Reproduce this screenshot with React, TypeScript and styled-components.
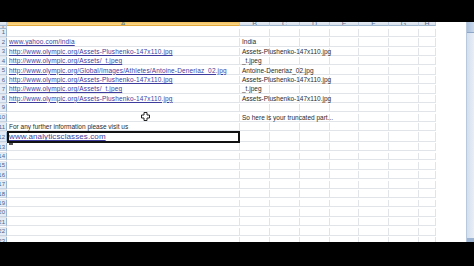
import React from 'react';
import styled, { createGlobalStyle } from 'styled-components';

const GlobalStyle = createGlobalStyle`
  html, body {
    margin: 0;
    padding: 0;
    background: #000;
  }
`;

const COLS = '7px 233px 30px 30px 30px 29px 30px 30px 17px';
const LETTERS = ['', 'A', 'B', 'C', 'D', 'E', 'F', 'G', 'H', 'I'];

const Screen = styled.div`
  width: 474px;
  height: 266px;
  background: #000;
  display: flex;
  flex-direction: column;
  overflow: hidden;
  font-family: 'Liberation Sans', Arial, sans-serif;
`;

const Letterbox = styled.div<{ $h: number }>`
  height: ${({ $h }) => $h}px;
  flex: none;
  background: #000;
`;

const Sheet = styled.div`
  height: 220px;
  flex: none;
  display: flex;
  background: #fff;
`;

const GridArea = styled.div`
  width: 466px;
  overflow: hidden;
  position: relative;
`;

const HeaderRow = styled.div`
  display: grid;
  grid-template-columns: ${COLS};
  height: 7px;
  overflow: hidden;
`;

const HeaderCell = styled.div<{ $active?: boolean }>`
  box-sizing: border-box;
  background: ${({ $active }) =>
    $active ? 'linear-gradient(#f3c15e, #f9d88c)' : 'linear-gradient(#e4eaf2, #d7e0ec)'};
  border-right: 1px solid #b9c8da;
  border-bottom: 1px solid ${({ $active }) => ($active ? '#e2a93c' : '#9eb6ce')};
  color: #5c6f8c;
  font-size: 7px;
  line-height: 4px;
  text-align: center;
  overflow: hidden;
`;

const Row = styled.div<{ $tall?: boolean }>`
  display: grid;
  grid-template-columns: ${COLS};
  height: ${({ $tall }) => ($tall ? 11 : 9.4)}px;
`;

const RowLabel = styled.div`
  box-sizing: border-box;
  background: #e4ecf7;
  border-right: 1px solid #9eb6ce;
  border-bottom: 1px solid #c5d3e3;
  color: #4e6384;
  font-size: 6px;
  display: flex;
  align-items: center;
  justify-content: flex-end;
  padding-right: 1px;
  overflow: hidden;
  white-space: nowrap;
`;

const Cell = styled.div`
  box-sizing: border-box;
  border-right: 1px solid #e1e4e8;
  border-bottom: 1px solid #e1e4e8;
  display: flex;
  align-items: center;
  padding-left: 2px;
  white-space: nowrap;
  min-width: 0;
`;

const CellText = styled.span<{ $link?: boolean; $big?: boolean }>`
  position: relative;
  z-index: 1;
  font-size: ${({ $big }) => ($big ? 8 : 6.5)}px;
  color: ${({ $link }) => ($link ? '#3e3d9e' : '#2b2b2b')};
  text-decoration: ${({ $link }) => ($link ? 'underline' : 'none')};
  letter-spacing: ${({ $link, $big }) => ($big ? '0.1px' : $link ? '0.15px' : '0')};
`;

const Selection = styled.div`
  position: absolute;
  left: 7px;
  top: 108.6px;
  width: 233px;
  height: 12px;
  box-sizing: border-box;
  border: 2px solid #111;
  z-index: 2;
  pointer-events: none;
`;

const PasteMark = styled.div`
  position: absolute;
  left: 9px;
  top: 121px;
  width: 4px;
  height: 2px;
  background: #555;
  z-index: 2;
`;

const Cursor = styled.svg`
  position: absolute;
  left: 141px;
  top: 90px;
  z-index: 3;
`;

const Scrollbar = styled.div`
  width: 8px;
  box-sizing: border-box;
  background: linear-gradient(90deg, #d3dfee, #e8eef6);
  border-left: 1px solid #b8c9dd;
  display: flex;
  flex-direction: column;
`;

const ScrollButton = styled.div`
  height: 11px;
  box-sizing: border-box;
  background: linear-gradient(90deg, #a9bfdb, #c9d7ea);
  border-bottom: 1px solid #8ea7c8;
`;

const ScrollTrack = styled.div`
  flex: 1;
`;

const ScrollEnd = styled.div`
  height: 4px;
  background: #9cb3d2;
`;

type RowData = { a?: string; link?: boolean; big?: boolean; b?: string };

const rows: RowData[] = [
  {},
  { a: 'www.yahoo.com/india', link: true, b: 'India' },
  { a: 'http://www.olympic.org/Assets-Plushenko-147x110.jpg', link: true, b: 'Assets-Plushenko-147x110.jpg' },
  { a: 'http://www.olympic.org/Assets/_t.jpeg', link: true, b: '_t.jpeg' },
  {
    a: 'http://www.olympic.org/Global/Images/Athletes/Antoine-Deneriaz_02.jpg',
    link: true,
    b: 'Antoine-Deneriaz_02.jpg',
  },
  { a: 'http://www.olympic.org/Assets-Plushenko-147x110.jpg', link: true, b: 'Assets-Plushenko-147x110.jpg' },
  { a: 'http://www.olympic.org/Assets/_t.jpeg', link: true, b: '_t.jpeg' },
  { a: 'http://www.olympic.org/Assets-Plushenko-147x110.jpg', link: true, b: 'Assets-Plushenko-147x110.jpg' },
  {},
  { b: 'So here is your truncated part...' },
  { a: 'For any further information please visit us' },
  { a: 'www.analyticsclasses.com', link: true, big: true },
  {},
  {},
  {},
  {},
  {},
  {},
  {},
  {},
  {},
  {},
  {},
];

const labelFor = (i: number) => (i + 1).toString();

export default function App() {
  return (
    <>
      <GlobalStyle />
      <Screen>
        <Letterbox $h={22} />
        <Sheet>
          <GridArea>
            <HeaderRow>
              {LETTERS.map((l, i) => (
                <HeaderCell key={i} $active={l === 'A'}>
                  {l}
                </HeaderCell>
              ))}
            </HeaderRow>
            {rows.map((r, i) => (
              <Row key={i} $tall={i === 11}>
                <RowLabel>{labelFor(i)}</RowLabel>
                <Cell>
                  {r.a && (
                    <CellText $link={r.link} $big={r.big}>
                      {r.a}
                    </CellText>
                  )}
                </Cell>
                <Cell>{r.b && <CellText>{r.b}</CellText>}</Cell>
                {LETTERS.slice(3).map((l) => (
                  <Cell key={l} />
                ))}
              </Row>
            ))}
            <Selection />
            <PasteMark />
            <Cursor width="9" height="9" viewBox="0 0 9 9">
              <path
                d="M3 0.5h3v2.5h2.5v3h-2.5v2.5h-3v-2.5h-2.5v-3h2.5z"
                fill="#fff"
                stroke="#222"
                strokeWidth="1"
              />
            </Cursor>
          </GridArea>
          <Scrollbar>
            <ScrollButton />
            <ScrollTrack />
            <ScrollEnd />
          </Scrollbar>
        </Sheet>
        <Letterbox $h={24} />
      </Screen>
    </>
  );
}
